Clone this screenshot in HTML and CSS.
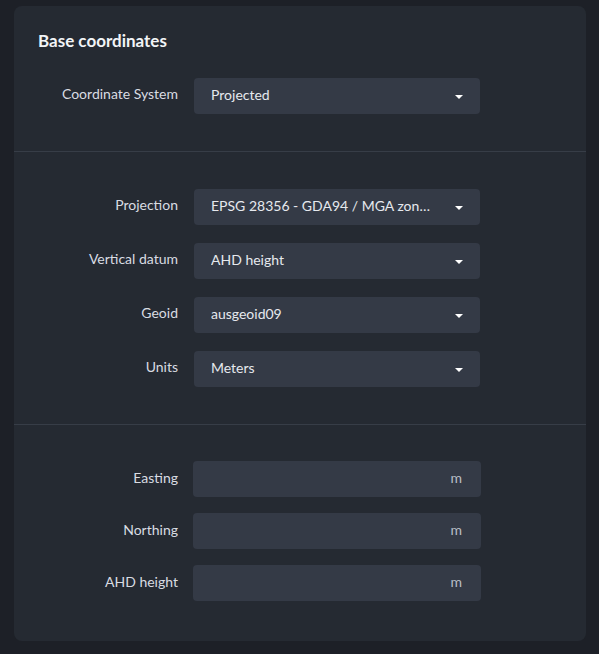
FILE: index.html
```html
<!DOCTYPE html>
<html>
<head>
<meta charset="utf-8">
<link rel="stylesheet" href="styles.css">
</head>
<body>
<div class="card">
  <section class="section first">
    <h2 class="title">Base coordinates</h2>
    <div class="form">
      <label class="label">Coordinate System</label>
      <div class="select"><span class="value">Projected</span><span class="caret"></span></div>
    </div>
  </section>
  <section class="section">
    <div class="form">
      <label class="label">Projection</label>
      <div class="select"><span class="value">EPSG 28356 - GDA94 / MGA zone 56</span><span class="caret"></span></div>
      <label class="label">Vertical datum</label>
      <div class="select"><span class="value">AHD height</span><span class="caret"></span></div>
      <label class="label">Geoid</label>
      <div class="select"><span class="value">ausgeoid09</span><span class="caret"></span></div>
      <label class="label">Units</label>
      <div class="select"><span class="value">Meters</span><span class="caret"></span></div>
    </div>
  </section>
  <section class="section last">
    <div class="form inputs">
      <label class="label">Easting</label>
      <div class="input"><input class="field" type="text"><span class="unit">m</span></div>
      <label class="label">Northing</label>
      <div class="input"><input class="field" type="text"><span class="unit">m</span></div>
      <label class="label">AHD height</label>
      <div class="input"><input class="field" type="text"><span class="unit">m</span></div>
    </div>
  </section>
</div>
</body>
</html>
```

FILE: styles.css
```css
html, body {
  margin: 0;
  padding: 0;
  background: #1d2027;
}
body {
  padding: 6px 13px 13px 14px;
  font-family: "Lato", "Noto Sans", sans-serif;
  color: #dde0e6;
}
.card {
  background: #252a32;
  border-radius: 8px;
  width: 572px;
  height: 635px;
  box-sizing: border-box;
}
.section {
  padding: 37px 24px 37px 24px;
  border-top: 1px solid #373d47;
}
.section.first {
  border-top: none;
  padding-top: 25px;
  padding-bottom: 37px;
}
.section.last {
  padding-top: 36px;
}
.title {
  margin: 0 0 27px 0;
  font-size: 17px;
  line-height: 20px;
  font-weight: 700;
  color: #f2f4f7;
}
.form {
  display: grid;
  grid-template-columns: 140px 286px;
  column-gap: 16px;
  row-gap: 18px;
}
.form.inputs {
  row-gap: 16px;
}
.label {
  text-align: right;
  font-size: 14px;
  line-height: 20px;
  padding-top: 6px;
  color: #d9dce2;
}
.inputs .label {
  padding-top: 7px;
}
.select {
  height: 36px;
  background: #343a46;
  border-radius: 4px;
  display: flex;
  align-items: center;
  padding: 0 17px;
  box-sizing: border-box;
}
.value {
  flex: 1;
  min-width: 0;
  overflow: hidden;
  white-space: nowrap;
  text-overflow: ellipsis;
  font-size: 14px;
  line-height: 20px;
  margin-bottom: 2px;
  color: #e6e9ee;
  padding-right: 20px;
}
.caret {
  width: 0;
  height: 0;
  border-left: 4px solid transparent;
  border-right: 4px solid transparent;
  border-top: 4px solid #ffffff;
  margin-top: 1px;
}
.input {
  height: 36px;
  margin: 0 -1px;
  background: #343a46;
  border-radius: 4px;
  display: flex;
  align-items: center;
  padding: 0 19px 0 17px;
}
.field {
  flex: 1;
  min-width: 0;
  background: transparent;
  border: none;
  outline: none;
  font-family: inherit;
  font-size: 14px;
  color: #e6e9ee;
  padding: 0;
}
.unit {
  font-size: 14px;
  line-height: 20px;
  margin-bottom: 2px;
  color: #b9bec7;
}
```
